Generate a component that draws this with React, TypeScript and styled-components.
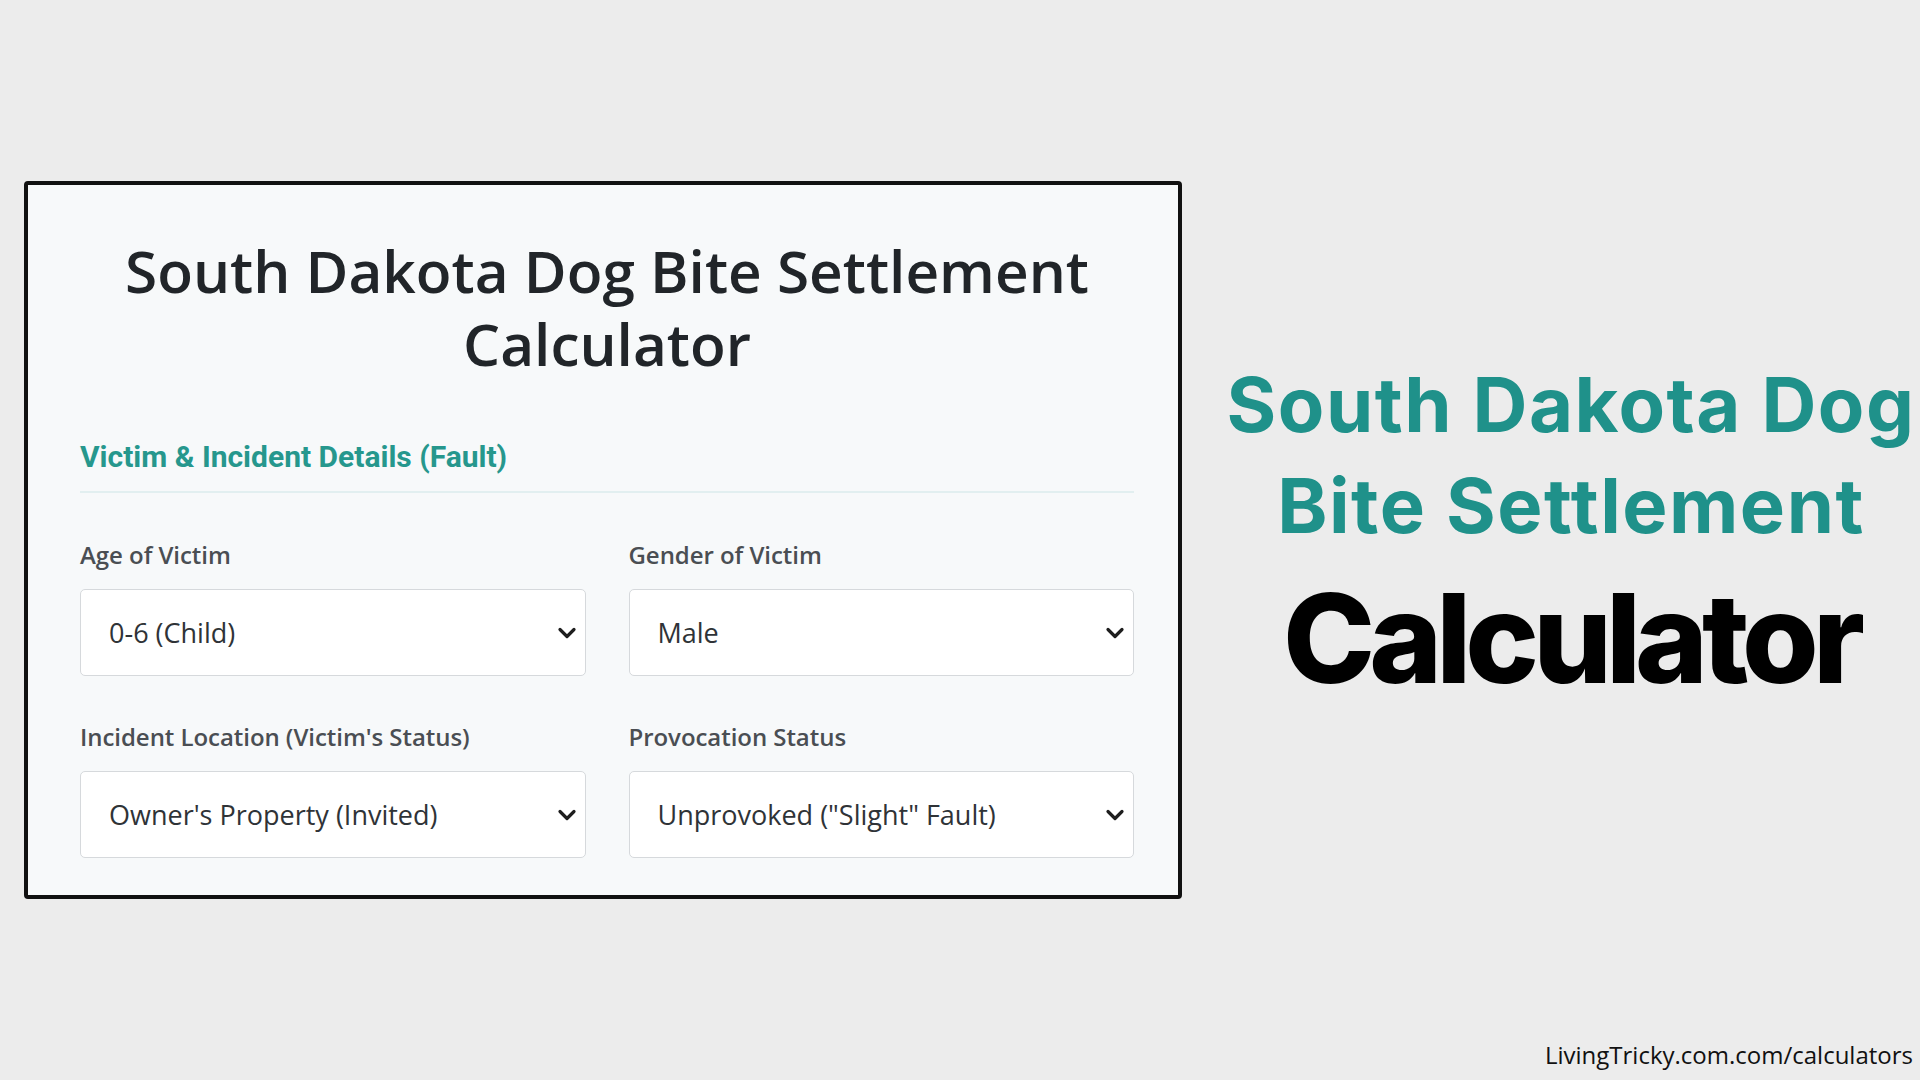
import React from "react";
import styled, { createGlobalStyle } from "styled-components";

const GlobalStyle = createGlobalStyle`
  html, body { margin: 0; padding: 0; background: #ececec; }
  * { box-sizing: border-box; }
`;

const Page = styled.div`
  position: relative;
  width: 1920px;
  height: 1080px;
  display: flex;
  align-items: center;
  padding-left: 24px;
  background: #ececec;
  overflow: hidden;
`;

const Card = styled.section`
  flex: none;
  width: 1158px;
  height: 718px;
  border: 4px solid #111;
  border-radius: 4px;
  background: #f7f9fa;
  padding: 49px 44px 0 52px;
  display: flex;
  flex-direction: column;
`;

const Title = styled.h1`
  margin: 0;
  font-family: "Open Sans", "Noto Sans", sans-serif;
  font-weight: 600;
  font-size: 58.5px;
  line-height: 73px;
  text-align: center;
  color: #212529;
`;

const SectionHeading = styled.h2`
  margin: 60px 0 0;
  padding-bottom: 17px;
  border-bottom: 2px solid #e2eff0;
  font-family: "Roboto", sans-serif;
  font-weight: 700;
  font-size: 30px;
  line-height: 34px;
  letter-spacing: 0;
  color: #26978d;
`;

const FieldGrid = styled.div`
  margin-top: 48px;
  display: grid;
  grid-template-columns: 1fr 1fr;
  column-gap: 43px;
  row-gap: 47px;
`;

const Field = styled.div`
  display: flex;
  flex-direction: column;
`;

const Label = styled.label`
  margin-bottom: 20px;
  font-family: "Open Sans", "Noto Sans", sans-serif;
  font-weight: 600;
  font-size: 24px;
  line-height: 28px;
  letter-spacing: -0.05px;
  color: #4a4e53;
`;

const SelectWrap = styled.div`
  position: relative;
`;

const Select = styled.select`
  width: 100%;
  height: 87px;
  appearance: none;
  -webkit-appearance: none;
  border: 1px solid #d6d9dc;
  border-radius: 5px;
  background: #fff;
  padding: 0 50px 0 28px;
  font-family: "Open Sans", "Noto Sans", sans-serif;
  font-size: 27px;
  color: #2f3337;
  outline: none;
`;

const Chevron = styled.svg`
  position: absolute;
  right: 9px;
  top: 50%;
  transform: translateY(-50%);
  pointer-events: none;
`;

const RightPanel = styled.div`
  flex: 1;
  height: 100%;
  display: flex;
  flex-direction: column;
  align-items: center;
  justify-content: center;
  padding-left: 40px;
  padding-bottom: 26px;
`;

const PromoHeading = styled.h2`
  margin: 0;
  font-family: "Inter", sans-serif;
  font-weight: 700;
  font-size: 76px;
  line-height: 101px;
  letter-spacing: 1.5px;
  text-align: center;
  white-space: nowrap;
  color: #1f918a;
`;

const PromoWord = styled.div`
  margin-top: 20px;
  font-family: "Inter", sans-serif;
  font-weight: 800;
  font-size: 124px;
  line-height: 124px;
  letter-spacing: -6px;
  color: #000;
`;

const Watermark = styled.div`
  position: absolute;
  right: 7px;
  bottom: 10px;
  font-family: "Open Sans", "Noto Sans", sans-serif;
  font-size: 24px;
  line-height: 30px;
  color: #111;
`;

type SelectFieldProps = { id: string; label: string; value: string };

const SelectField = ({ id, label, value }: SelectFieldProps) => (
  <Field>
    <Label htmlFor={id}>{label}</Label>
    <SelectWrap>
      <Select id={id} defaultValue={value}>
        <option value={value}>{value}</option>
      </Select>
      <Chevron width="20" height="12" viewBox="0 0 20 12">
        <path d="M3 2.5l7 7 7-7" fill="none" stroke="#1e1e1e" strokeWidth="3.2" strokeLinecap="round" strokeLinejoin="round" />
      </Chevron>
    </SelectWrap>
  </Field>
);

export default function App() {
  return (
    <>
      <GlobalStyle />
      <Page>
        <Card>
          <Title>South Dakota Dog Bite Settlement Calculator</Title>
          <SectionHeading>Victim &amp; Incident Details (Fault)</SectionHeading>
          <FieldGrid>
            <SelectField id="age" label="Age of Victim" value="0-6 (Child)" />
            <SelectField id="gender" label="Gender of Victim" value="Male" />
            <SelectField id="location" label="Incident Location (Victim's Status)" value="Owner's Property (Invited)" />
            <SelectField id="provocation" label="Provocation Status" value={'Unprovoked ("Slight" Fault)'} />
          </FieldGrid>
        </Card>
        <RightPanel>
          <PromoHeading>
            South Dakota Dog
            <br />
            Bite Settlement
          </PromoHeading>
          <PromoWord>Calculator</PromoWord>
        </RightPanel>
        <Watermark>LivingTricky.com.com/calculators</Watermark>
      </Page>
    </>
  );
}
